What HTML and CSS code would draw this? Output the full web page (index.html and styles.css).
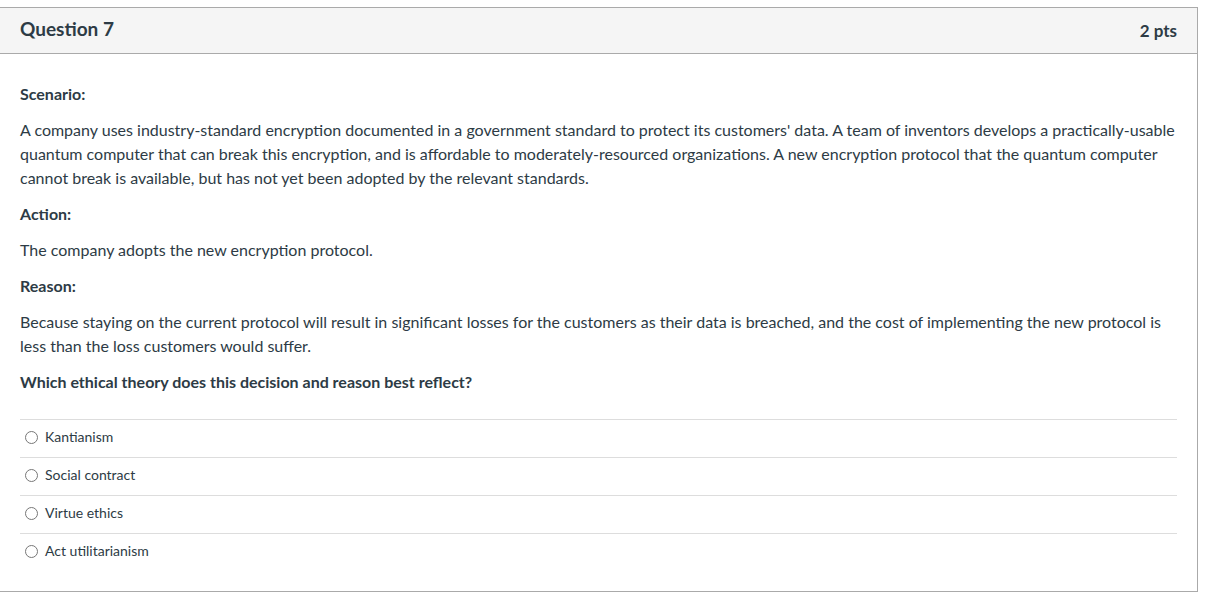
FILE: index.html
```html
<!DOCTYPE html>
<html lang="en">
<head>
<meta charset="utf-8">
<title>Question 7</title>
<link rel="stylesheet" href="styles.css">
</head>
<body>
<div class="question">
  <div class="q-header">
    <span class="q-name">Question 7</span>
    <span class="q-points">2 pts</span>
  </div>
  <div class="q-body">
    <div class="q-text">
      <p class="label">Scenario:</p>
      <p>A company uses industry-standard encryption documented in a government standard to protect its customers' data. A team of inventors develops a practically-usable quantum computer that can break this encryption, and is affordable to moderately-resourced organizations. A new encryption protocol that the quantum computer cannot break is available, but has not yet been adopted by the relevant standards.</p>
      <p class="label">Action:</p>
      <p>The company adopts the new encryption protocol.</p>
      <p class="label">Reason:</p>
      <p>Because staying on the current protocol will result in significant losses for the customers as their data is breached, and the cost of implementing the new protocol is less than the loss customers would suffer.</p>
      <p class="label">Which ethical theory does this decision and reason best reflect?</p>
    </div>
    <div class="answers">
      <label class="answer"><span class="radio"></span><span class="answer-text">Kantianism</span></label>
      <label class="answer"><span class="radio"></span><span class="answer-text">Social contract</span></label>
      <label class="answer"><span class="radio"></span><span class="answer-text">Virtue ethics</span></label>
      <label class="answer"><span class="radio"></span><span class="answer-text">Act utilitarianism</span></label>
    </div>
  </div>
</div>
</body>
</html>
```

FILE: styles.css
```css
html, body {
  margin: 0;
  padding: 0;
  background: #ffffff;
}

body {
  font-family: Lato, "Open Sans", "Liberation Sans", sans-serif;
  color: #2d3b45;
  padding-top: 7px;
}

.question {
  margin: 0 13px 0 -1px;
  border: 1px solid #aaaaaa;
  background: #ffffff;
}

.q-header {
  display: flex;
  justify-content: space-between;
  align-items: center;
  height: 45px;
  padding: 0 20px;
  background: #f5f5f5;
  border-bottom: 1px solid #aaaaaa;
}

.q-name {
  font-size: 19px;
  font-weight: 700;
  color: #2d3b45;
  margin-top: -5px;
}

.q-points {
  font-size: 17px;
  font-weight: 700;
  color: #2d3b45;
  margin-top: -1px;
}

.q-body {
  padding: 28px 20px 20px 20px;
}

.q-text p {
  margin: 0 0 12px 0;
  font-size: 16px;
  line-height: 24px;
}

.q-text p.label {
  font-weight: 700;
}

.answers {
  margin-top: 25px;
}

.answer {
  display: flex;
  align-items: center;
  height: 37px;
  border-top: 1px solid #dddddd;
  padding-left: 5px;
  font-size: 14px;
}

.radio {
  width: 11px;
  height: 11px;
  border: 1px solid #777777;
  border-radius: 50%;
  margin-right: 7px;
  margin-top: -3px;
  flex-shrink: 0;
}

.answer-text {
  margin-top: -5px;
}
```
